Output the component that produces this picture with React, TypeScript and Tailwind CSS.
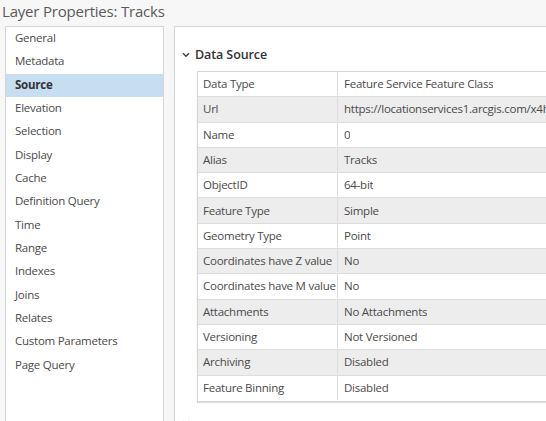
import React from "react";

const navItems = [
  "General",
  "Metadata",
  "Source",
  "Elevation",
  "Selection",
  "Display",
  "Cache",
  "Definition Query",
  "Time",
  "Range",
  "Indexes",
  "Joins",
  "Relates",
  "Custom Parameters",
  "Page Query",
];

const rows: [string, string][] = [
  ["Data Type", "Feature Service Feature Class"],
  ["Url", "https://locationservices1.arcgis.com/x4hG2kqPJ7bRtZ0m/arcgis/rest/services"],
  ["Name", "0"],
  ["Alias", "Tracks"],
  ["ObjectID", "64-bit"],
  ["Feature Type", "Simple"],
  ["Geometry Type", "Point"],
  ["Coordinates have Z value", "No"],
  ["Coordinates have M value", "No"],
  ["Attachments", "No Attachments"],
  ["Versioning", "Not Versioned"],
  ["Archiving", "Disabled"],
  ["Feature Binning", "Disabled"],
];

function Chevron() {
  return (
    <svg width="8" height="6" viewBox="0 0 8 6" className="shrink-0">
      <path d="M1 1.2 L4 4.2 L7 1.2" fill="none" stroke="#444" strokeWidth="1.5" />
    </svg>
  );
}

export default function App() {
  return (
    <div className="w-[546px] h-[421px] overflow-hidden bg-[#f7f7f7] font-['Open_Sans',sans-serif] text-[#4a4a4a]">
      <div className="h-[26px] pl-[2px] text-[15px] tracking-[-0.2px] leading-[22px] text-[#5a5a5a] whitespace-nowrap">
        Layer Properties: Tracks
      </div>
      <div className="flex gap-[10px] pl-[5px] h-[395px]">
        <div className="w-[159px] shrink-0 bg-white border border-b-0 border-[#d6d6d6]">
          {navItems.map((n) => (
            <div
              key={n}
              className={
                n === "Source"
                  ? "h-[23.33px] flex items-center pl-[9px] pb-[2px] text-[11.5px] tracking-[-0.25px] font-bold text-[#333] bg-[#c7ddf0] whitespace-nowrap"
                  : "h-[23.33px] flex items-center pl-[9px] pb-[2px] text-[11.5px] tracking-[-0.25px] whitespace-nowrap"
              }
            >
              {n}
            </div>
          ))}
        </div>
        <div className="w-[420px] shrink-0 bg-white border border-b-0 border-r-0 border-[#d6d6d6]">
          <div className="flex items-center gap-[5px] pl-[7px] pt-[12px] h-[44px]">
            <Chevron />
            <span className="text-[12.5px] tracking-[-0.1px] font-semibold text-[#333]">Data Source</span>
          </div>
          <div className="ml-[22px] border border-r-0 border-[#d4d4d4] shadow-[0_1px_1px_rgba(0,0,0,0.12)]">
            {rows.map(([k, v], i) => (
              <div
                key={k}
                className={
                  i % 2 === 1
                    ? "flex h-[25.3px] pb-[1px] border-b border-[#dcdcdc] last:border-b-0 bg-[#ededed] text-[11.5px] tracking-[-0.25px]"
                    : "flex h-[25.3px] pb-[1px] border-b border-[#dcdcdc] last:border-b-0 bg-white text-[11.5px] tracking-[-0.25px]"
                }
              >
                <div className="w-[140px] shrink-0 flex items-center pl-[5px] border-r border-[#dcdcdc] whitespace-nowrap">
                  {k}
                </div>
                <div className="flex items-center pl-[6px] whitespace-nowrap overflow-hidden">{v}</div>
              </div>
            ))}
          </div>
          <div className="flex items-center pl-[7px] pt-[18px]">
            <Chevron />
          </div>
        </div>
      </div>
    </div>
  );
}
